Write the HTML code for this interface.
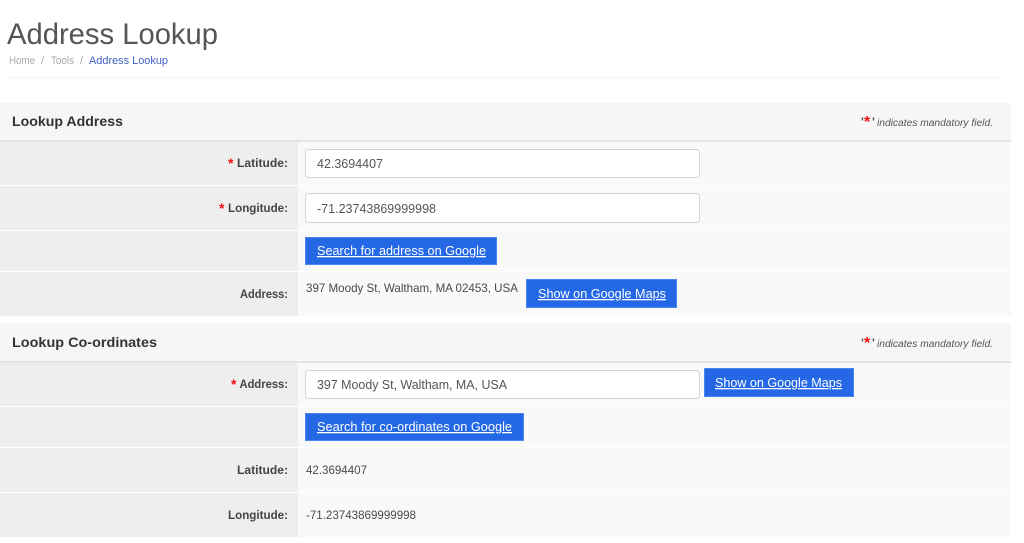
<!DOCTYPE html>
<html><head><meta charset="utf-8"><title>Address Lookup</title>
<style>
html,body{margin:0;padding:0;background:#fff;width:1024px;height:543px;overflow:hidden}
svg{display:block;font-family:"Liberation Sans",Arial,sans-serif;filter:blur(0.3px)}
.lb{font-weight:bold;font-size:11.5px;fill:#444}
.v{font-size:12px;fill:#4a4a4a}
.i{font-size:13px;fill:#555}
.b{font-size:13px;fill:#fff;text-decoration:underline}
.h{font-weight:bold;font-size:14px;fill:#333}
.m{font-style:italic;font-size:10px;fill:#555}
.s{font-weight:bold;font-size:14px;fill:#f01010}
.r{font-weight:bold;font-size:16px;fill:#f01010}
.q{font-weight:bold;font-size:12px;fill:#555}
.in{fill:#fff;stroke:#d4d4d4}
.bt{fill:#2468e6;stroke:#4a86ee}
</style></head><body>
<svg width="1024" height="543" viewBox="0 0 1024 543" xmlns="http://www.w3.org/2000/svg">
<rect width="1024" height="543" fill="#fff"/>
<text x="7" y="44" font-size="30" fill="#555" textLength="211" lengthAdjust="spacingAndGlyphs">Address Lookup</text>
<text x="9" y="64" font-size="11" fill="#aaa" textLength="26" lengthAdjust="spacingAndGlyphs">Home</text>
<text x="41" y="64" font-size="11" fill="#aaa">/</text>
<text x="51" y="64" font-size="11" fill="#aaa" textLength="23" lengthAdjust="spacingAndGlyphs">Tools</text>
<text x="80" y="64" font-size="11" fill="#aaa">/</text>
<text x="89" y="64" font-size="11" fill="#3f5fc0" textLength="79" lengthAdjust="spacingAndGlyphs">Address Lookup</text>
<rect x="7" y="77" width="993" height="1" fill="#f4f4f4"/>

<rect x="0" y="103" width="1011" height="37" fill="#f6f6f6"/>
<rect x="0" y="140" width="1011" height="2" fill="#e4e4e4"/>
<text class="h" x="12" y="126" textLength="111" lengthAdjust="spacingAndGlyphs">Lookup Address</text>
<text class="q" x="861" y="126">'</text><text class="r" x="864" y="127">*</text><text class="q" x="872" y="126">'</text>
<text class="m" x="877" y="126" textLength="116" lengthAdjust="spacingAndGlyphs">indicates mandatory field.</text>

<rect x="0" y="142" width="298" height="43" fill="#eeeeee"/><rect x="298" y="142" width="713" height="43" fill="#f9f9f9"/>
<rect x="0" y="186" width="298" height="44" fill="#eeeeee"/><rect x="298" y="186" width="713" height="44" fill="#f9f9f9"/>
<rect x="0" y="231" width="298" height="40" fill="#eeeeee"/><rect x="298" y="231" width="713" height="40" fill="#f9f9f9"/>
<rect x="0" y="272" width="298" height="44" fill="#eeeeee"/><rect x="298" y="272" width="713" height="44" fill="#f9f9f9"/>

<text class="s" x="228" y="168">*</text>
<text class="lb" x="237" y="167" textLength="51" lengthAdjust="spacingAndGlyphs">Latitude:</text>
<rect class="in" x="305.500" y="149.500" width="394" height="28" rx="3"/>
<text class="i" x="317" y="168" textLength="66" lengthAdjust="spacingAndGlyphs">42.3694407</text>

<text class="s" x="219" y="213">*</text>
<text class="lb" x="228" y="212" textLength="60" lengthAdjust="spacingAndGlyphs">Longitude:</text>
<rect class="in" x="305.500" y="193.500" width="394" height="29" rx="3"/>
<text class="i" x="317" y="213" textLength="119" lengthAdjust="spacingAndGlyphs">-71.23743869999998</text>

<rect class="bt" x="305.500" y="237.500" width="191" height="27"/>
<text class="b" x="317" y="255" textLength="169" lengthAdjust="spacingAndGlyphs">Search for address on Google</text>

<text class="lb" x="240" y="298" textLength="48" lengthAdjust="spacingAndGlyphs">Address:</text>
<text class="v" x="306" y="292" textLength="212" lengthAdjust="spacingAndGlyphs">397 Moody St, Waltham, MA 02453, USA</text>
<rect class="bt" x="526.500" y="279.500" width="150" height="28"/>
<text class="b" x="538" y="298" textLength="128" lengthAdjust="spacingAndGlyphs">Show on Google Maps</text>

<rect x="0" y="323" width="1011" height="38" fill="#f6f6f6"/>
<rect x="0" y="361" width="1011" height="2" fill="#e4e4e4"/>
<text class="h" x="12" y="347" textLength="145" lengthAdjust="spacingAndGlyphs">Lookup Co-ordinates</text>
<text class="q" x="861" y="347">'</text><text class="r" x="864" y="348">*</text><text class="q" x="872" y="347">'</text>
<text class="m" x="877" y="347" textLength="116" lengthAdjust="spacingAndGlyphs">indicates mandatory field.</text>

<rect x="0" y="363" width="298" height="43" fill="#eeeeee"/><rect x="298" y="363" width="713" height="43" fill="#f9f9f9"/>
<rect x="0" y="407" width="298" height="40" fill="#eeeeee"/><rect x="298" y="407" width="713" height="40" fill="#f9f9f9"/>
<rect x="0" y="448" width="298" height="44" fill="#eeeeee"/><rect x="298" y="448" width="713" height="44" fill="#f9f9f9"/>
<rect x="0" y="493" width="298" height="44" fill="#eeeeee"/><rect x="298" y="493" width="713" height="44" fill="#f9f9f9"/>

<text class="s" x="231" y="389">*</text>
<text class="lb" x="239.500" y="388" textLength="48.500" lengthAdjust="spacingAndGlyphs">Address:</text>
<rect class="in" x="305.500" y="370.500" width="394" height="28" rx="3"/>
<text class="i" x="317" y="389" textLength="190" lengthAdjust="spacingAndGlyphs">397 Moody St, Waltham, MA, USA</text>
<rect class="bt" x="704.500" y="368.500" width="149" height="28"/>
<text class="b" x="715" y="387" textLength="127" lengthAdjust="spacingAndGlyphs">Show on Google Maps</text>

<rect class="bt" x="305.500" y="413.500" width="218" height="27"/>
<text class="b" x="317" y="431" textLength="195" lengthAdjust="spacingAndGlyphs">Search for co-ordinates on Google</text>

<text class="lb" x="237" y="474" textLength="51" lengthAdjust="spacingAndGlyphs">Latitude:</text>
<text class="v" x="306" y="474" textLength="61" lengthAdjust="spacingAndGlyphs">42.3694407</text>
<text class="lb" x="228" y="519" textLength="60" lengthAdjust="spacingAndGlyphs">Longitude:</text>
<text class="v" x="306" y="519" textLength="110" lengthAdjust="spacingAndGlyphs">-71.23743869999998</text>
</svg>
</body></html>
